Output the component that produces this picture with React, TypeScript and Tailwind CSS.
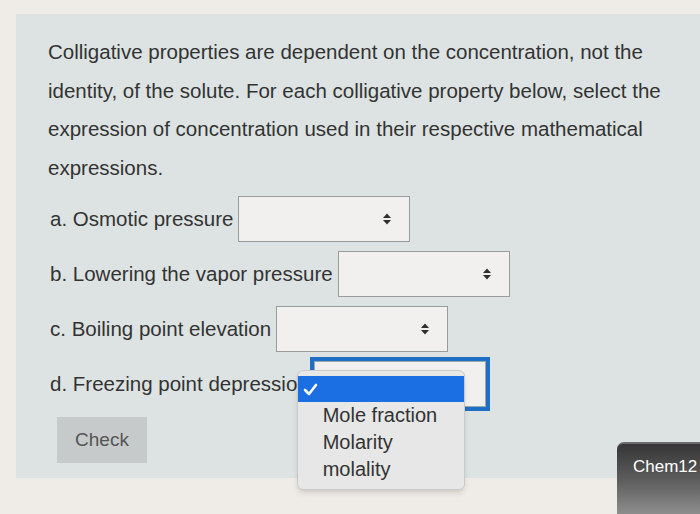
const FONT = { fontFamily: '"Liberation Sans", Arial, sans-serif' };

function Arrows() {
  return (
    <svg width="8" height="12" viewBox="0 0 8 12" className="shrink-0">
      <polygon points="0,5 4,0.5 8,5" fill="#2f2f2f" />
      <polygon points="0,7 4,11.5 8,7" fill="#2f2f2f" />
    </svg>
  );
}

function SelectBox({ focused }: { focused?: boolean }) {
  return (
    <div
      className={`flex h-[46px] w-[172px] shrink-0 items-center justify-end bg-[#f1f0ee] pr-[18px] ${
        focused ? "border border-[#9aa] ring-4 ring-[#1f6fc6]" : "border border-[#9a9c9c]"
      }`}
    >
      {/* the open menu covers the arrows of the focused box */}
      {focused ? null : <Arrows />}
    </div>
  );
}

function Row({ label, children }: { label: string; children: React.ReactNode }) {
  return (
    <div className="flex h-[46px] items-center gap-[5px] pl-[2px]">
      <span className="whitespace-nowrap text-[20.5px] text-[#333]">{label}</span>
      {children}
    </div>
  );
}

export default function App() {
  return (
    <div
      style={FONT}
      className="relative h-[514px] w-[700px] overflow-hidden bg-[#efece8] pl-[16px] pt-[14px]"
    >
      <div className="h-[464px] bg-[#dde3e2] pl-[32px] pt-[19px]">
        <p className="whitespace-nowrap text-[20.5px] leading-[38.5px] text-[#333]">
          Colligative properties are dependent on the concentration, not the
          <br />
          identity, of the solute. For each colligative property below, select the
          <br />
          expression of concentration used in their respective mathematical
          <br />
          expressions.
        </p>

        <div className="mt-[9px] flex flex-col gap-[9px]">
          <Row label="a. Osmotic pressure">
            <SelectBox />
          </Row>
          <Row label="b. Lowering the vapor pressure">
            <SelectBox />
          </Row>
          <Row label="c. Boiling point elevation">
            <SelectBox />
          </Row>
          <Row label="d. Freezing point depression">
            <div className="relative">
              <SelectBox focused />
              <div className="absolute left-[-17px] top-[9px] z-10 w-[168px] overflow-hidden rounded-[6px] border border-[#c9cbcb] bg-[#e6e7e6] pb-[6px] pt-[5px] shadow-md">
                <div className="flex h-[26px] items-center bg-[#1c6fe3] pl-[5px]">
                  <svg width="15" height="13" viewBox="0 0 15 13">
                    <polyline
                      points="2,7 6,11 13,2"
                      fill="none"
                      stroke="#fff"
                      strokeWidth="2.6"
                      strokeLinecap="round"
                      strokeLinejoin="round"
                    />
                  </svg>
                </div>
                <div className="pl-[25px] text-[20px] leading-[27px] text-[#333]">
                  <div>Mole fraction</div>
                  <div>Molarity</div>
                  <div>molality</div>
                </div>
              </div>
            </div>
          </Row>
        </div>

        <button
          type="button"
          className="ml-[9px] mt-[10px] h-[46px] w-[90px] bg-[#c6cacb] text-[19px] text-[#555]"
        >
          Check
        </button>
      </div>

      <div className="absolute bottom-0 right-0 h-[72px] w-[83px] rounded-tl-[7px] border-t-2 border-[#6a6a6a] bg-gradient-to-b from-[#363636] via-[#5c5c5c] to-[#8e8e8e] pl-[16px] pt-[10px] text-[17px] text-white">
        Chem12
      </div>
    </div>
  );
}
